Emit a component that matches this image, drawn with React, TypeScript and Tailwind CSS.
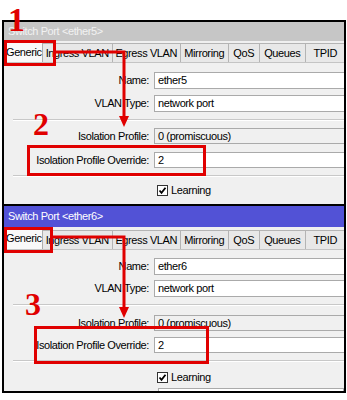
import React from "react";

const FONT = "font-['Liberation_Sans',Arial,sans-serif] text-[11px] tracking-[-0.4px] text-black";

function Field({ label, value, disabled, h, mt }: { label: string; value: string; disabled?: boolean; h: string; mt: string }) {
  return (
    <div className={`flex items-center ${mt} ${h}`}>
      <div className="w-[146px] shrink-0 text-right pr-[1px] leading-none">{label}</div>
      <div
        className={`ml-[4px] flex-1 -mr-[4px] ${h} flex items-center pl-[3px] border border-[#aaaaaa] leading-none ${
          disabled ? "bg-[#f0f0f0]" : "bg-white"
        }`}
      >
        {value}
      </div>
    </div>
  );
}

function Sep({ mt }: { mt: string }) {
  return <div className={`${mt} ml-[9px] h-[2px] border-t border-[#c8c8c8] bg-white`} />;
}

function Tabs({ h }: { h: string }) {
  const tabs: [string, string][] = [
    ["Ingress VLAN", "w-[70px]"],
    ["Egress VLAN", "w-[68px]"],
    ["Mirroring", "w-[48px]"],
    ["QoS", "w-[31px]"],
    ["Queues", "w-[46px]"],
    ["TPID", "w-[40px]"],
  ];
  return (
    <div className={`flex items-end ${h} pl-[1px] border-b border-[#c4c4c4]`}>
      <div className="w-[49px] h-full bg-[#f9f9f9] border border-b-0 border-[#adadad] flex items-center justify-center leading-none">
        Generic
      </div>
      {tabs.map(([t, w]) => (
        <div
          key={t}
          className={`${w} shrink-0 h-[19px] bg-[#e8e8e8] border border-l-0 border-b-0 border-[#b4b4b4] flex items-center justify-center leading-none whitespace-nowrap overflow-hidden`}
        >
          {t}
        </div>
      ))}
    </div>
  );
}

function Check({ mt }: { mt: string }) {
  return (
    <div className={`flex items-center ${mt} h-[14px] pl-[153px]`}>
      <div className="w-[11px] h-[11px] border border-[#333] bg-white flex items-center justify-center">
        <svg width="9" height="9" viewBox="0 0 9 9">
          <path d="M1.5 4.5 L3.5 6.8 L7.5 1.8" stroke="#000" strokeWidth="1.8" fill="none" />
        </svg>
      </div>
      <span className="ml-[3px] leading-none">Learning</span>
    </div>
  );
}

export default function App() {
  return (
    <div className={`relative w-[347px] h-[400px] bg-white overflow-hidden ${FONT}`}>
      <div className="pt-[20px] pl-[2px] w-[346px]">
        {/* Panel 1 */}
        <div className="h-[184px] border-x-2 border-t-2 border-black bg-[#f0f0f0] overflow-hidden">
          <div className="h-[19px] bg-[#c6c6c6] text-[#f2f2f2] flex items-center pl-[4px] leading-none">
            Switch Port &lt;ether5&gt;
          </div>
          <Tabs h="h-[22px]" />
          <Field label="Name:" value="ether5" h="h-[17px]" mt="mt-[9px]" />
          <Field label="VLAN Type:" value="network port" h="h-[17px]" mt="mt-[6px]" />
          <Sep mt="mt-[7px]" />
          <Field label="Isolation Profile:" value="0 (promiscuous)" disabled h="h-[16px]" mt="mt-[7px]" />
          <Field label="Isolation Profile Override:" value="2" h="h-[16px]" mt="mt-[8px]" />
          <Sep mt="mt-[7px]" />
          <Check mt="mt-[6px]" />
        </div>
        {/* Panel 2 */}
        <div className="h-[189px] border-2 border-black bg-[#f0f0f0] overflow-hidden">
          <div className="h-[21px] bg-[#5252d6] text-white flex items-center pl-[4px] leading-none">
            Switch Port &lt;ether6&gt;
          </div>
          <Tabs h="h-[23px]" />
          <Field label="Name:" value="ether6" h="h-[17px]" mt="mt-[8px]" />
          <Field label="VLAN Type:" value="network port" h="h-[17px]" mt="mt-[5px]" />
          <Sep mt="mt-[7px]" />
          <Field label="Isolation Profile:" value="0 (promiscuous)" disabled h="h-[16px]" mt="mt-[9px]" />
          <Field label="Isolation Profile Override:" value="2" h="h-[16px]" mt="mt-[6px]" />
          <Sep mt="mt-[7px]" />
          <Check mt="mt-[8px]" />
          <div className="mt-[4px] ml-[154px] h-[16px] border border-[#aaaaaa] bg-white" />
        </div>
      </div>

      {/* Annotations */}
      <svg className="absolute left-0 top-0 pointer-events-none" width="347" height="400" viewBox="0 0 347 400">
        <g stroke="#e00000" strokeWidth="3" fill="none">
          <rect x="5.5" y="41.5" width="49" height="23" />
          <rect x="28.5" y="146.5" width="176" height="28" />
          <rect x="5.5" y="228.5" width="46" height="23" />
          <rect x="35.5" y="327.5" width="172" height="35" />
          <polyline points="55,52 124,52 124,118" />
          <polyline points="52,237 124,237 124,309" />
        </g>
        <g fill="#e00000">
          <polygon points="119,116 129,116 124,127" />
          <polygon points="119,307 129,307 124,318" />
        </g>
      </svg>
      <div className="absolute left-[8px] top-[3px] font-['Liberation_Serif',serif] font-bold text-[34px] leading-none tracking-normal text-[#e00000]">
        1
      </div>
      <div className="absolute left-[33px] top-[108px] font-['Liberation_Serif',serif] font-bold text-[32px] leading-none tracking-normal text-[#e00000]">
        2
      </div>
      <div className="absolute left-[25px] top-[288px] font-['Liberation_Serif',serif] font-bold text-[32px] leading-none tracking-normal text-[#e00000]">
        3
      </div>
    </div>
  );
}
